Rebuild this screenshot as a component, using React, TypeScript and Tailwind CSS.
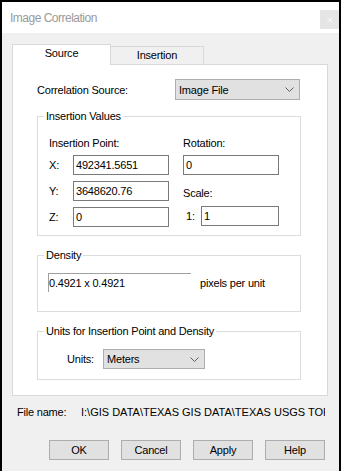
import React from 'react';

const Chevron: React.FC = () => (
  <svg width="9" height="5" viewBox="0 0 9 5" className="ml-auto shrink-0">
    <polyline points="0.5,0.5 4.5,4.5 8.5,0.5" fill="none" stroke="#5f5f5f" strokeWidth="1" />
  </svg>
);

const Field: React.FC<{ value: string; width: string }> = ({ value, width }) => (
  <div className={'flex items-center h-[20px] border border-[#7a7a7a] bg-white pl-[2px] ' + width}>{value}</div>
);

const Group: React.FC<{ title: string; className?: string; children: React.ReactNode }> = ({ title, className, children }) => (
  <fieldset className={'w-[264px] border border-[#dcdcdc] ' + (className ?? '')}>
    <legend className="ml-[6px] px-[2px] leading-[14px]">{title}</legend>
    {children}
  </fieldset>
);

const Button: React.FC<{ label: string }> = ({ label }) => (
  <div className="w-[60px] h-[20px] border border-[#adadad] bg-[#e1e1e1] flex items-center justify-center">{label}</div>
);

export default function App() {
  return (
    <div className="w-[341px] h-[471px] border-x-2 border-t-2 border-black bg-[#f0f0f0] text-black text-[11px] leading-[14px] tracking-[-0.2px] font-['Liberation_Sans',Arial,sans-serif] overflow-hidden">
      {/* title bar */}
      <div className="h-[31px] bg-white flex items-start">
        <span className="pl-[8px] mt-[8px] text-[12px] leading-[16px] tracking-[-0.5px] text-[#9a9a9a]">Image Correlation</span>
        <div className="ml-auto mt-[8px] w-[19px] h-[19px] bg-[#e5e5e5] flex items-center justify-center">
          <svg width="6" height="6" viewBox="0 0 6 6">
            <path d="M0.5 0.5 L5.5 5.5 M5.5 0.5 L0.5 5.5" stroke="#f7f7f7" strokeWidth="1" />
          </svg>
        </div>
      </div>

      <div className="px-[10px] pt-[11px]">
        {/* tabs */}
        <div className="flex items-end h-[21px]">
          <div className="relative z-10 w-[99px] h-[21px] bg-white border-x border-t border-[#d9d9d9] flex justify-center pt-[1px]">Source</div>
          <div className="w-[93px] h-[19px] bg-[#f0f0f0] border-t border-r border-b border-[#d9d9d9] flex justify-center pt-[1px]">Insertion</div>
        </div>

        {/* panel */}
        <div className="-mt-px w-[316px] h-[332px] bg-white border border-[#d9d9d9] pl-[24px] pt-[14px] flex flex-col">
          <div className="flex items-center h-[21px]">
            <span className="w-[138px]">Correlation Source:</span>
            <div className="flex items-center w-[125px] h-[21px] border border-[#adadad] bg-[#e1e1e1] pl-[3px] pr-[5px]">
              Image File
              <Chevron />
            </div>
          </div>

          <Group title="Insertion Values" className="mt-[9px]">
            <div className="flex pl-[11px] pt-[13px] pb-[8px]">
              <div className="w-[134px] flex flex-col">
                <span>Insertion Point:</span>
                <div className="flex flex-col gap-[6px] mt-[5px]">
                  <div className="flex items-center">
                    <span className="w-[24px]">X:</span>
                    <Field value="492341.5651" width="w-[96px]" />
                  </div>
                  <div className="flex items-center">
                    <span className="w-[24px]">Y:</span>
                    <Field value="3648620.76" width="w-[96px]" />
                  </div>
                  <div className="flex items-center">
                    <span className="w-[24px]">Z:</span>
                    <Field value="0" width="w-[96px]" />
                  </div>
                </div>
              </div>
              <div className="flex flex-col">
                <span>Rotation:</span>
                <div className="mt-[5px]">
                  <Field value="0" width="w-[96px]" />
                </div>
                <span className="mt-[11px]">Scale:</span>
                <div className="flex items-center mt-[6px]">
                  <span className="w-[18px] pl-[3px]">1:</span>
                  <Field value="1" width="w-[78px]" />
                </div>
              </div>
            </div>
          </Group>

          <Group title="Density" className="mt-[12px]">
            <div className="flex items-center pl-[10px] pt-[11px] pb-[19px]">
              <div className="w-[143px] h-[19px] border-t border-l border-[#a0a0a0] flex items-center">0.4921 x 0.4921</div>
              <span className="ml-[9px]">pixels per unit</span>
            </div>
          </Group>

          <Group title="Units for Insertion Point and Density" className="mt-[12px]">
            <div className="flex items-center pl-[29px] pt-[11px] pb-[10px]">
              <span className="w-[36px]">Units:</span>
              <div className="flex items-center w-[102px] h-[20px] border border-[#adadad] bg-[#e1e1e1] pl-[3px] pr-[5px]">
                Meters
                <Chevron />
              </div>
            </div>
          </Group>
        </div>

        {/* file name */}
        <div className="mt-[9px] pl-[5px] flex">
          <span className="w-[64px] shrink-0">File name:</span>
          <span className="w-[244px] overflow-hidden whitespace-nowrap tracking-normal">I:\GIS DATA\TEXAS GIS DATA\TEXAS USGS TOPO\IMAGES</span>
        </div>

        {/* buttons */}
        <div className="mt-[21px] pl-[37px] flex gap-[12px]">
          <Button label="OK" />
          <Button label="Cancel" />
          <Button label="Apply" />
          <Button label="Help" />
        </div>
      </div>
    </div>
  );
}
